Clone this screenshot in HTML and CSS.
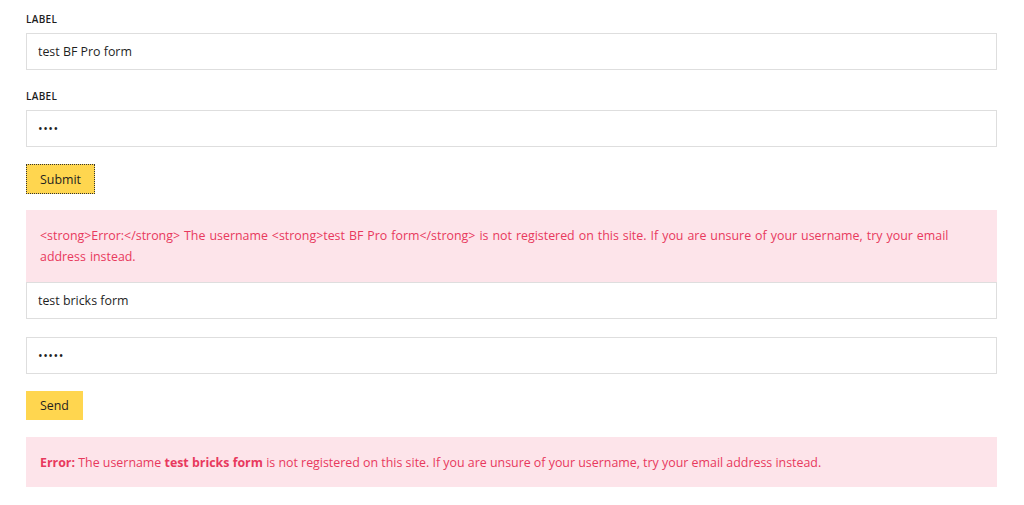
FILE: index.html
```html
<!DOCTYPE html>
<html lang="en">
<head>
<meta charset="utf-8">
<title>Forms</title>
<link rel="stylesheet" href="styles.css">
</head>
<body>
<main class="page">
  <form class="form form-pro">
    <div class="field">
      <label class="label">Label</label>
      <input class="input" type="text" value="test BF Pro form">
    </div>
    <div class="field">
      <label class="label">Label</label>
      <input class="input" type="password" value="abcd">
    </div>
    <div class="actions">
      <button type="button" class="btn btn-focus">Submit</button>
    </div>
  </form>
  <div class="alert alert-wrap">&lt;strong&gt;Error:&lt;/strong&gt; The username &lt;strong&gt;test BF Pro form&lt;/strong&gt; is not registered on this site. If you are unsure of your username, try your email address instead.</div>
  <form class="form form-bricks">
    <input class="input" type="text" value="test bricks form">
    <input class="input input-gap" type="password" value="abcde">
    <div class="actions actions-bricks">
      <button type="button" class="btn btn-send">Send</button>
    </div>
  </form>
  <div class="alert alert-single"><strong>Error:</strong> The username <strong>test bricks form</strong> is not registered on this site. If you are unsure of your username, try your email address instead.</div>
</main>
</body>
</html>
```
FILE: styles.css
```css
* { box-sizing: border-box; }
html, body { margin: 0; padding: 0; background: #fff; }
body {
  font-family: "Open Sans", "Noto Sans", sans-serif;
  font-size: 12.4px;
  color: #1f1f1f;
}
.page {
  padding: 12px 27px 0 26px;
}
.form { display: flex; flex-direction: column; }
.field { display: flex; flex-direction: column; margin-bottom: 19px; }
.label {
  display: block;
  font-size: 10px;
  font-weight: 600;
  letter-spacing: 0.3px;
  text-transform: uppercase;
  color: #1d1d1d;
  line-height: 15px;
  margin-bottom: 6px;
}
.input {
  display: block;
  width: 100%;
  height: 37px;
  border: 1px solid #dedede;
  background: #fff;
  padding: 0 11px;
  font-family: inherit;
  font-size: 12.4px;
  color: #1f1f1f;
  outline: none;
}
.input[type="password"] { letter-spacing: 0.5px; }
.input-gap { margin-top: 18px; }
.actions { display: flex; margin-top: -2px; }
.btn {
  font-family: inherit;
  font-size: 12.4px;
  color: #1f1f1f;
  background: #ffd64f;
  border: none;
  height: 30px;
  padding: 0 14px;
  cursor: pointer;
}
.btn-focus { outline: 1px dotted #333; outline-offset: -1px; }
.btn-send { height: 29px; padding: 0 14px; }
.actions-bricks { margin-top: 17px; }
.alert {
  background: #fde4ea;
  color: #e8395d;
  font-size: 12.4px;
  line-height: 21px;
}
.alert-wrap {
  margin-top: 16px;
  padding: 15px 14px 15px 14px;
  word-spacing: 0.8px;
}
.alert-single {
  margin-top: 17px;
  padding: 14.5px 14px;
}
.alert strong { font-weight: 700; }
```
